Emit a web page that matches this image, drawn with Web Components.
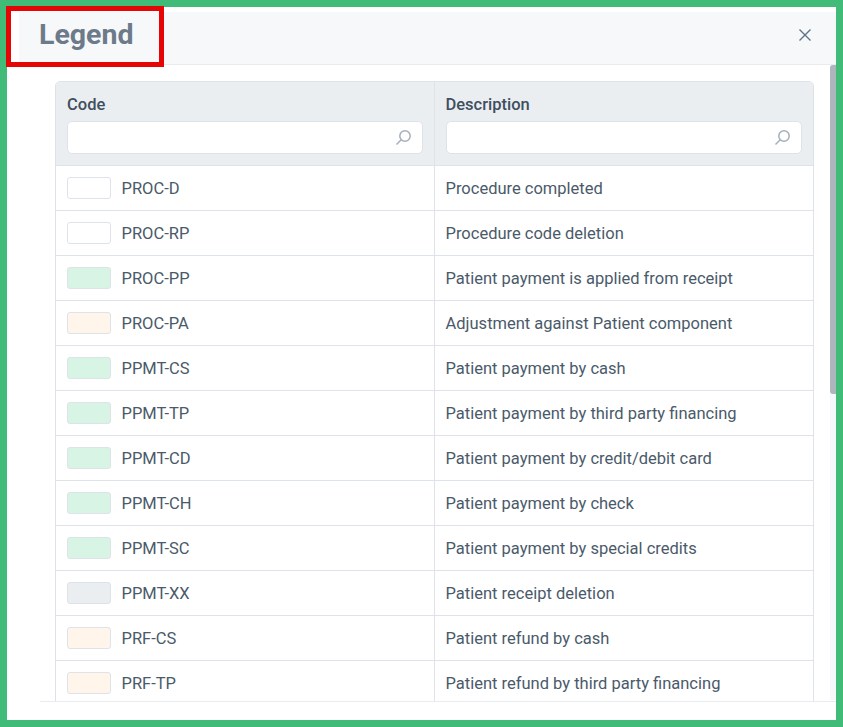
<!DOCTYPE html>
<html>
<head>
<meta charset="utf-8">
<title>Legend</title>
<style>
  html, body { margin: 0; height: 100%; overflow: hidden; }
  body { font-family: Roboto, "Liberation Sans", sans-serif; }
</style>
</head>
<body>
<legend-modal heading="Legend">
  <legend-table></legend-table>
</legend-modal>

<script>
const rows = [
  ["PROC-D", "Procedure completed", "white"],
  ["PROC-RP", "Procedure code deletion", "white"],
  ["PROC-PP", "Patient payment is applied from receipt", "green"],
  ["PROC-PA", "Adjustment against Patient component", "orange"],
  ["PPMT-CS", "Patient payment by cash", "green"],
  ["PPMT-TP", "Patient payment by third party financing", "green"],
  ["PPMT-CD", "Patient payment by credit/debit card", "green"],
  ["PPMT-CH", "Patient payment by check", "green"],
  ["PPMT-SC", "Patient payment by special credits", "green"],
  ["PPMT-XX", "Patient receipt deletion", "grey"],
  ["PRF-CS", "Patient refund by cash", "orange"],
  ["PRF-TP", "Patient refund by third party financing", "orange"],
];

class LegendModal extends HTMLElement {
  constructor() {
    super();
    this.shadowDOM = this.attachShadow({ mode: "open" });
  }

  connectedCallback() {
    this.shadowDOM.innerHTML = `
    <style>
    * { box-sizing: border-box; }
    :host {
      display: flex;
      flex-direction: column;
      box-sizing: border-box;
      width: 843px;
      height: 727px;
      border: 7px solid #41bb78;
      background: #fff;
      position: relative;
    }
    header {
      flex: none;
      height: 53px;
      margin: 5px 0 0 12px;
      padding: 0 24px 7px 20px;
      background: #f7f8fa;
      border-bottom: 1px solid #e9ecef;
      display: flex;
      align-items: center;
      justify-content: space-between;
    }
    h1 {
      margin: 0;
      font-size: 28.5px;
      font-weight: 700;
      color: #6c7a89;
    }
    .close { display: flex; }
    .mark {
      position: absolute;
      left: -1px;
      top: -1px;
      width: 158px;
      height: 61px;
      border: 5px solid #e60505;
    }
    main {
      padding: 16px 0 0 48px;
    }
    .body {
      height: 620px;
      overflow: hidden;
    }
    .rail {
      position: absolute;
      right: 0;
      top: 58px;
      bottom: 20px;
      width: 6px;
      background: #f6f7fb;
    }
    .thumb {
      width: 6px;
      height: 329px;
      background: #adb5bd;
      border-radius: 3px 0 0 3px;
    }
    .foot {
      position: absolute;
      left: 33px;
      right: 0;
      top: 694px;
      height: 1px;
      background: #e9ecef;
    }
    </style>
    <header>
      <h1>${this.getAttribute("heading")}</h1>
      <span class="close">
        <svg width="14" height="14" viewBox="0 0 14 14" fill="none" stroke="#5c7389" stroke-width="1.4">
          <path d="M1.5 1.5l11 11M12.5 1.5l-11 11"/>
        </svg>
      </span>
    </header>
    <main><div class="body"><slot></slot></div></main>
    <div class="rail"><div class="thumb"></div></div>
    <div class="foot"></div>
    <div class="mark"></div>`;
  }
}

class LegendTable extends HTMLElement {
  constructor() {
    super();
    this.shadowDOM = this.attachShadow({ mode: "open" });
  }

  connectedCallback() {
    this.shadowDOM.innerHTML = `
    <style>
    * { box-sizing: border-box; }
    :host {
      display: block;
      width: 757px;
      border: 1px solid #dee2e9;
      border-radius: 5px 5px 0 0;
      font-size: 16.5px;
      color: #4a5a6a;
      overflow: hidden;
    }
    .head {
      display: grid;
      grid-template-columns: 378px 1fr;
      background: #ebeef1;
      height: 84px;
      border-bottom: 1px solid #dee2e9;
    }
    .head > div {
      padding: 13px 11px 0;
    }
    .head > div + div {
      border-left: 1px solid #dee2e9;
    }
    .head strong {
      display: block;
      font-weight: 500;
      color: #3d4f60;
      line-height: 20px;
      margin-bottom: 6px;
    }
    .head > div + div strong { margin-left: -0.5px; }
    </style>
    <div class="head">
      <div><strong>Code</strong><search-box></search-box></div>
      <div><strong>Description</strong><search-box></search-box></div>
    </div>
    <div class="rows"></div>`;

    const list = this.shadowDOM.querySelector(".rows");
    rows.forEach(([code, text, tone]) => {
      const row = document.createElement("legend-row");
      row.setAttribute("tone", tone);
      row.innerHTML = `<span slot="code">${code}</span><span slot="text">${text}</span>`;
      list.appendChild(row);
    });
  }
}

class SearchBox extends HTMLElement {
  constructor() {
    super();
    this.shadowDOM = this.attachShadow({ mode: "open" });
    this.shadowDOM.innerHTML = `
    <style>
    :host {
      display: flex;
      align-items: center;
      justify-content: flex-end;
      box-sizing: border-box;
      height: 33px;
      padding-right: 10px;
      background: #fff;
      border: 1px solid #dee2e9;
      border-radius: 5px;
    }
    svg { display: block; }
    </style>
    <svg width="17" height="17" viewBox="0 0 17 17" fill="none" stroke="#a3afba" stroke-width="1.5">
      <circle cx="10" cy="7" r="5.2"/>
      <path d="M6.2 10.8L1.5 15.5"/>
    </svg>`;
  }
}

class LegendRow extends HTMLElement {
  constructor() {
    super();
    this.shadowDOM = this.attachShadow({ mode: "open" });
    this.shadowDOM.innerHTML = `
    <style>
    * { box-sizing: border-box; }
    :host {
      display: grid;
      grid-template-columns: 378px 1fr;
      height: 45px;
      border-bottom: 1px solid #dee2e9;
    }
    .cell {
      display: flex;
      align-items: center;
      padding: 0 11px;
      line-height: 20px;
    }
    .cell slot { display: block; padding-top: 1px; }
    .cell + .cell { border-left: 1px solid #dee2e9; padding-left: 10.5px; }
    .swatch {
      flex: none;
      width: 44px;
      height: 22px;
      margin-right: 10.5px;
      border: 1px solid #dee2e9;
      border-radius: 3px;
      background: #fff;
    }
    :host([tone="green"]) .swatch { background: #d8f4e4; }
    :host([tone="orange"]) .swatch { background: #fff5eb; }
    :host([tone="grey"]) .swatch { background: #ebeef1; }
    </style>
    <div class="cell"><span class="swatch"></span><slot name="code"></slot></div>
    <div class="cell"><slot name="text"></slot></div>`;
  }
}

customElements.define("search-box", SearchBox);
customElements.define("legend-row", LegendRow);
customElements.define("legend-table", LegendTable);
customElements.define("legend-modal", LegendModal);
</script>
</body>
</html>
